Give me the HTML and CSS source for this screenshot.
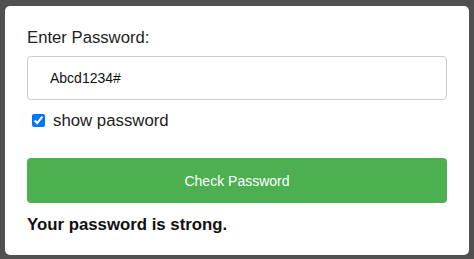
FILE: index.html
```html
<!DOCTYPE html>
<html>
<head>
<meta charset="utf-8">
<link rel="stylesheet" href="styles.css">
</head>
<body>
<div class="card">
  <label class="label" for="pw">Enter Password:</label>
  <input class="field" id="pw" type="text" value="Abcd1234#">
  <div class="show-row">
    <input class="check" id="show" type="checkbox" checked>
    <label for="show">show password</label>
  </div>
  <button class="btn">Check Password</button>
  <p class="result">Your password is strong.</p>
</div>
</body>
</html>
```
FILE: styles.css
```css
html, body {
  margin: 0;
  padding: 0;
}
body {
  background: #505050;
  font-family: "Liberation Sans", Arial, sans-serif;
  width: 474px;
  height: 259px;
  overflow: hidden;
}
.card {
  margin: 6px 5px 0 5px;
  height: 249px;
  box-sizing: border-box;
  background: #ffffff;
  border-radius: 5px;
  padding: 22px 22px 0 22px;
}
.label {
  display: block;
  font-size: 16.7px;
  line-height: 19px;
  color: #222;
}
.field {
  display: block;
  box-sizing: border-box;
  margin-top: 9px;
  width: 420px;
  height: 44px;
  border: 1px solid #cccccc;
  border-radius: 4px;
  padding: 0 0 0 22px;
  font-family: "Liberation Sans", Arial, sans-serif;
  font-size: 14px;
  color: #111;
  outline: none;
}
.show-row {
  display: flex;
  align-items: center;
  margin-top: 11px;
  font-size: 16.8px;
  line-height: 19px;
  color: #222;
}
.check {
  width: 13px;
  height: 13px;
  margin: 0 8px 0 5px;
}
.btn {
  display: block;
  margin-top: 28px;
  width: 420px;
  height: 45px;
  border: none;
  border-radius: 4px;
  background: #4caf50;
  color: #ffffff;
  font-family: "Liberation Sans", Arial, sans-serif;
  font-size: 14px;
}
.result {
  margin: 12px 0 0 0;
  font-size: 16.8px;
  line-height: 19px;
  font-weight: bold;
  color: #111;
}
```
